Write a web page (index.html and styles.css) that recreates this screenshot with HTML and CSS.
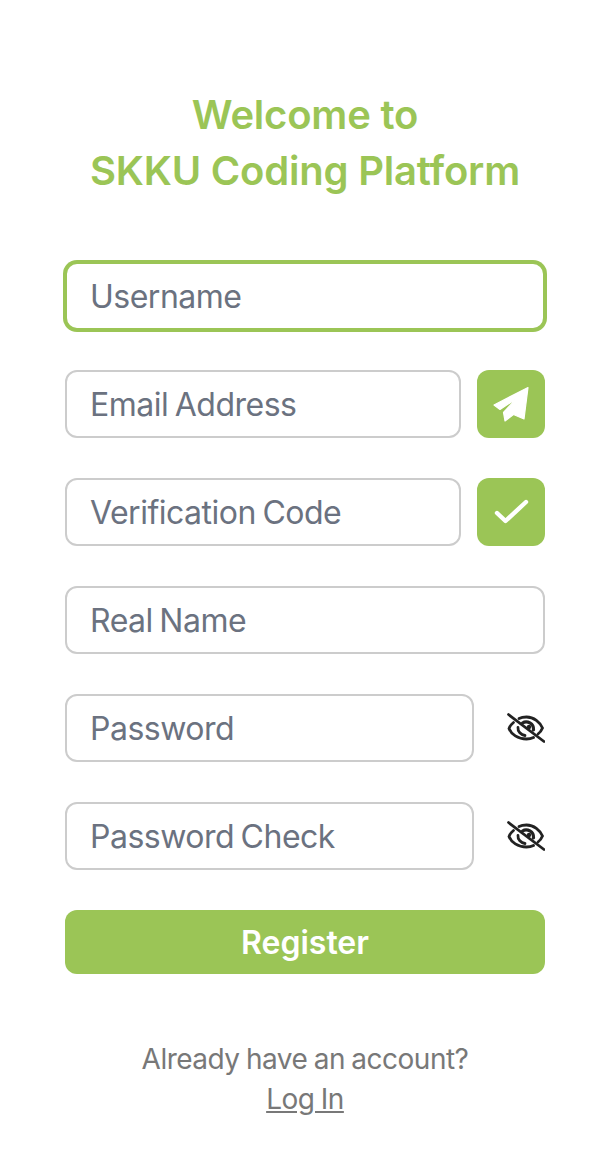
FILE: index.html
```html
<!DOCTYPE html>
<html lang="en">
<head>
    <meta charset="UTF-8">
    <meta name="viewport" content="width=device-width, initial-scale=1.0">
    <title>SKKU Coding Platform - Register</title>
    <link rel="stylesheet" href="styles.css">
</head>
<body>
    <main class="register">
        <h1 class="title">Welcome to<br>SKKU Coding Platform</h1>

        <form class="form">
            <input class="field field-focus" type="text" placeholder="Username">

            <div class="row">
                <input class="field" type="email" placeholder="Email Address">
                <button class="icon-button" type="button" aria-label="Send code">
                    <svg width="36" height="36" viewBox="0 0 36 36">
                        <path fill="#fff" stroke="#fff" stroke-width="1.200" stroke-linejoin="round" d="M35 1.500 L1 19 L7 23.500 L23.500 12.500 L10.500 26.500 L12 35 L20.500 28.500 L31 33 Z"/>
                    </svg>
                </button>
            </div>

            <div class="row">
                <input class="field" type="text" placeholder="Verification Code">
                <button class="icon-button" type="button" aria-label="Verify code">
                    <svg width="36" height="36" viewBox="0 0 36 36">
                        <path fill="none" stroke="#fff" stroke-width="4.400" stroke-linecap="round" stroke-linejoin="round" d="M4 19 L12.500 27 L33 8"/>
                    </svg>
                </button>
            </div>

            <input class="field" type="text" placeholder="Real Name">

            <div class="row row-password">
                <input class="field" type="password" placeholder="Password">
                <button class="eye-button" type="button" aria-label="Show password">
                    <svg width="38" height="30" viewBox="0 0 38 30" fill="none" stroke="#222" stroke-width="2.800" stroke-linecap="round">
                        <path d="M6.500 9.500 C4 11.500 2.500 13.500 2 15.500 C4 21 11 26 19.500 26 C22 26 24.500 25.500 26.500 24.500"/>
                        <path d="M12 5.500 C14 4.500 17 4 19.500 4 C27 4 33 9.500 35.500 15 C34.500 17.500 33 19.500 31 21"/>
                        <path d="M11 14.500 C10.500 18.500 14 22 18 22.500"/>
                        <path stroke-width="3.200" d="M15.500 10 C20 7 27 10.500 26.500 17"/>
                        <circle cx="22" cy="14" r="2.200" fill="#222" stroke="none"/>
                        <path d="M1.500 1.500 L37 28.500"/>
                    </svg>
                </button>
            </div>

            <div class="row row-password">
                <input class="field" type="password" placeholder="Password Check">
                <button class="eye-button" type="button" aria-label="Show password check">
                    <svg width="38" height="30" viewBox="0 0 38 30" fill="none" stroke="#222" stroke-width="2.800" stroke-linecap="round">
                        <path d="M6.500 9.500 C4 11.500 2.500 13.500 2 15.500 C4 21 11 26 19.500 26 C22 26 24.500 25.500 26.500 24.500"/>
                        <path d="M12 5.500 C14 4.500 17 4 19.500 4 C27 4 33 9.500 35.500 15 C34.500 17.500 33 19.500 31 21"/>
                        <path d="M11 14.500 C10.500 18.500 14 22 18 22.500"/>
                        <path stroke-width="3.200" d="M15.500 10 C20 7 27 10.500 26.500 17"/>
                        <circle cx="22" cy="14" r="2.200" fill="#222" stroke="none"/>
                        <path d="M1.500 1.500 L37 28.500"/>
                    </svg>
                </button>
            </div>

            <button class="submit" type="button">Register</button>
        </form>

        <p class="login">Already have an account?<br><a href="#">Log In</a></p>
    </main>
</body>
</html>
```

FILE: styles.css
```css
body {
    margin: 0;
    padding: 87px 71px 0 65px;
    background-color: white;
    font-family: 'Inter', 'Noto Sans', sans-serif;
}
.title {
    margin: 0 0 63px;
    color: #9bc556;
    font-size: 40px;
    font-weight: 600;
    line-height: 56px;
    letter-spacing: -0.2px;
    text-align: center;
}
.form {
    display: flex;
    flex-direction: column;
    gap: 40px;
}
.row {
    display: flex;
    gap: 16px;
}
.field {
    box-sizing: border-box;
    width: 100%;
    min-width: 0;
    height: 68px;
    padding: 0 23px;
    border: 2px solid #cccccc;
    border-radius: 12px;
    outline: none;
    color: #333;
    font-family: inherit;
    font-size: 32px;
    letter-spacing: -0.5px;
    word-spacing: -2px;
}
.row .field {
    flex: 1;
}
.field::placeholder {
    color: #6b7280;
    opacity: 1;
}
.field-focus {
    border-color: #9bc556;
    box-shadow: 0 0 0 2px #9bc556;
}
.icon-button {
    display: flex;
    align-items: center;
    justify-content: center;
    flex: none;
    width: 68px;
    height: 68px;
    padding: 0;
    border: none;
    border-radius: 12px;
    background-color: #9bc556;
}
.eye-button {
    display: flex;
    align-items: center;
    justify-content: flex-end;
    flex: none;
    width: 56px;
    padding: 0;
    border: none;
    background: none;
}
.row-password {
    gap: 15px;
}
.submit {
    height: 64px;
    border: none;
    border-radius: 12px;
    background-color: #9bc556;
    color: white;
    font-family: inherit;
    font-size: 32px;
    font-weight: 600;
}
.login {
    margin: 65px 0 0;
    color: #787878;
    font-size: 28px;
    line-height: 40px;
    letter-spacing: -0.5px;
    word-spacing: -1px;
    text-align: center;
}
.login a {
    color: #787878;
}
```
